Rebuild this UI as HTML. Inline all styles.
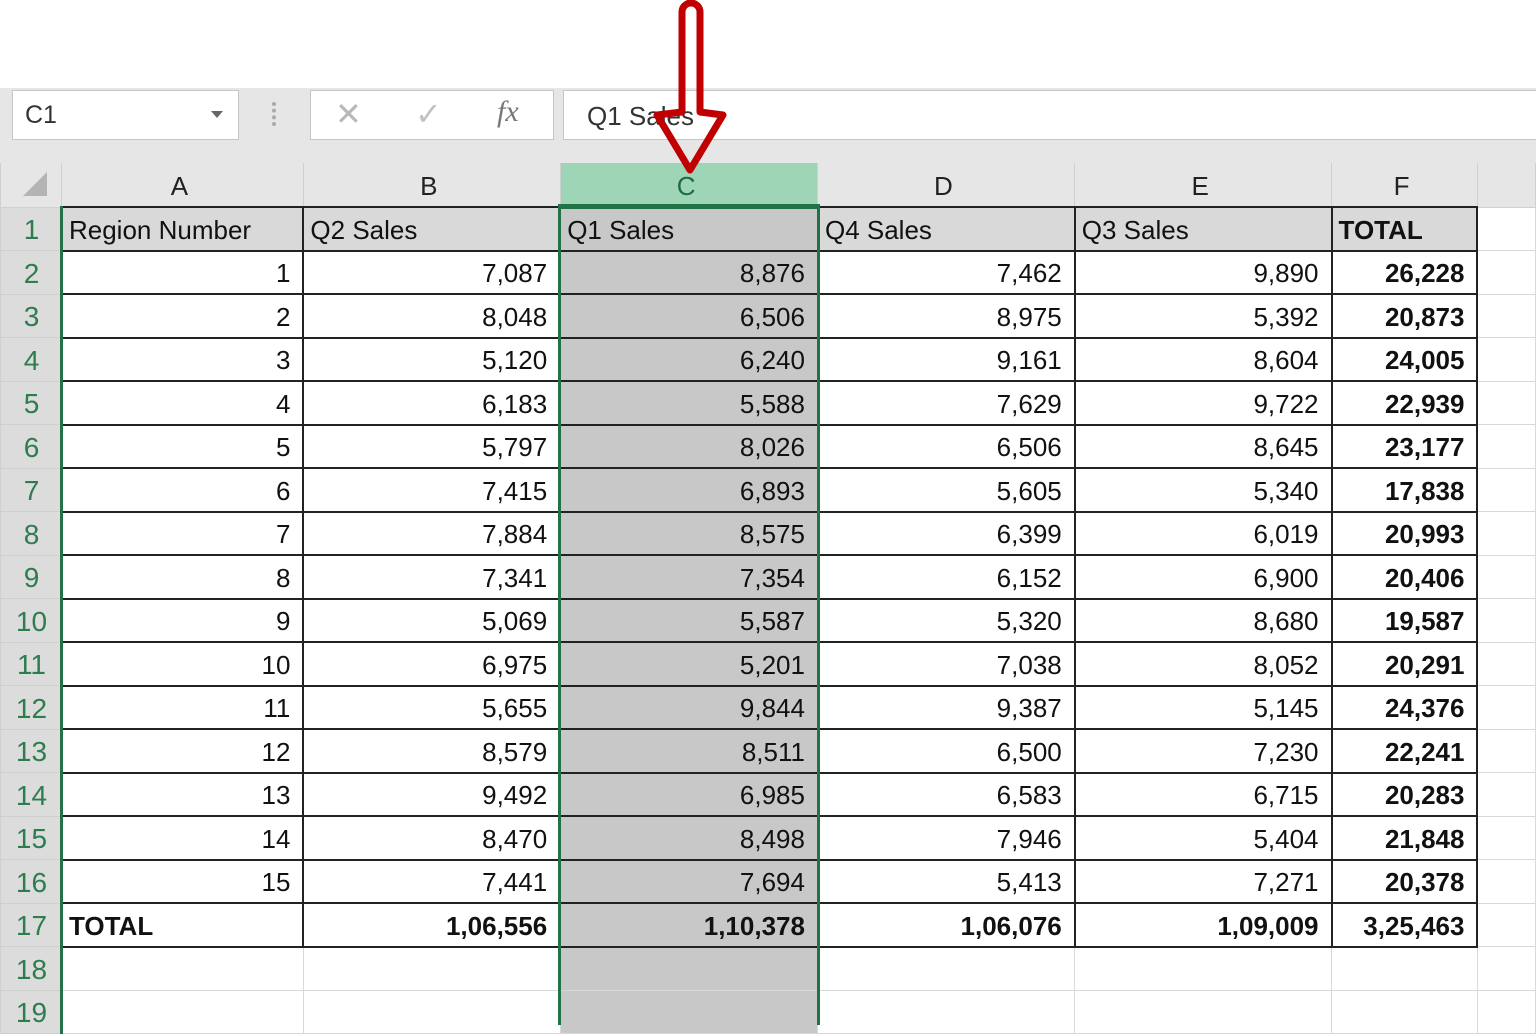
<!DOCTYPE html>
<html><head><meta charset="utf-8"><style>
*{margin:0;padding:0;box-sizing:border-box}
body{width:1536px;height:1020px;overflow:hidden;background:#fff;font-family:"Liberation Sans",Calibri,sans-serif;position:relative}
.bar{position:absolute;left:0;top:88px;width:1536px;height:75px;background:#e6e6e6}
.box{position:absolute;background:#fff;border:1px solid #c6c6c6}
table{position:absolute;left:0;top:163px;border-collapse:collapse;table-layout:fixed}
td{height:43.5px;border:1px solid #d8d8d8;font-size:26px;color:#111;padding:0 12px 0 6px;white-space:nowrap;overflow:hidden;vertical-align:bottom;padding-bottom:4px}
tr.h td{height:44px;background:#e6e6e6;text-align:center;color:#222;border-color:#d0d0d0;border-top:none}
td.rh{background:#dcdcdc;color:#2e7d4f;text-align:center;padding:0 0 4px 2px;font-size:28px;border-color:#cfcfcf;border-right:3px solid #217346}
td.d{border:2px solid #222;text-align:right}
td.l{text-align:left}
tr.r1 td.d{background:#d9d9d9;text-align:left}
td.c{background:#c8c8c8!important}
td.b{font-weight:bold}
</style></head><body>
<div class="bar"></div>
<div class="box" style="left:12px;top:90px;width:227px;height:50px"><span style="position:absolute;left:12px;top:10px;font-size:25px;color:#333">C1</span><span style="position:absolute;left:198px;top:20px;border:6px solid transparent;border-top:7px solid #666"></span></div>
<div style="position:absolute;left:272px;top:102px;width:4px;height:24px;border-left:4px dotted #aaa"></div>
<div class="box" style="left:310px;top:90px;width:244px;height:50px"><span style="position:absolute;left:24px;top:4px;font-size:32px;color:#b8b8b8">✕</span><span style="position:absolute;left:104px;top:4px;font-size:32px;color:#c2c2c2">✓</span><span style="position:absolute;left:186px;top:4px;font-size:30px;color:#777;font-style:italic;font-family:'Liberation Serif',serif">fx</span></div>
<div class="box" style="left:563px;top:90px;width:980px;height:50px"><span style="position:absolute;left:23px;top:10px;font-size:26px;color:#333">Q1 Sales</span></div>
<table>
<colgroup><col style="width:61px"><col style="width:242px"><col style="width:257px"><col style="width:258px"><col style="width:257px"><col style="width:257px"><col style="width:146px"><col style="width:58px"></colgroup>
<tr class="h"><td style="background:#e6e6e6;border-right:1px solid #d0d0d0"><svg width="30" height="30" style="position:relative;left:6px;top:2px"><polygon points="28,4 28,28 4,28" fill="#b4b4b4"/></svg></td><td>A</td><td>B</td><td style="background:#9fd5b7;color:#1e6b41;border-bottom:3px solid #217346">C</td><td>D</td><td>E</td><td>F</td><td></td></tr>
<tr class="r1"><td class="rh">1</td><td class="d l">Region Number</td><td class="d">Q2 Sales</td><td class="d c">Q1 Sales</td><td class="d">Q4 Sales</td><td class="d">Q3 Sales</td><td class="d b">TOTAL</td><td></td></tr>
<tr><td class="rh">2</td><td class="d">1</td><td class="d">7,087</td><td class="d c">8,876</td><td class="d">7,462</td><td class="d">9,890</td><td class="d b">26,228</td><td></td></tr>
<tr><td class="rh">3</td><td class="d">2</td><td class="d">8,048</td><td class="d c">6,506</td><td class="d">8,975</td><td class="d">5,392</td><td class="d b">20,873</td><td></td></tr>
<tr><td class="rh">4</td><td class="d">3</td><td class="d">5,120</td><td class="d c">6,240</td><td class="d">9,161</td><td class="d">8,604</td><td class="d b">24,005</td><td></td></tr>
<tr><td class="rh">5</td><td class="d">4</td><td class="d">6,183</td><td class="d c">5,588</td><td class="d">7,629</td><td class="d">9,722</td><td class="d b">22,939</td><td></td></tr>
<tr><td class="rh">6</td><td class="d">5</td><td class="d">5,797</td><td class="d c">8,026</td><td class="d">6,506</td><td class="d">8,645</td><td class="d b">23,177</td><td></td></tr>
<tr><td class="rh">7</td><td class="d">6</td><td class="d">7,415</td><td class="d c">6,893</td><td class="d">5,605</td><td class="d">5,340</td><td class="d b">17,838</td><td></td></tr>
<tr><td class="rh">8</td><td class="d">7</td><td class="d">7,884</td><td class="d c">8,575</td><td class="d">6,399</td><td class="d">6,019</td><td class="d b">20,993</td><td></td></tr>
<tr><td class="rh">9</td><td class="d">8</td><td class="d">7,341</td><td class="d c">7,354</td><td class="d">6,152</td><td class="d">6,900</td><td class="d b">20,406</td><td></td></tr>
<tr><td class="rh">10</td><td class="d">9</td><td class="d">5,069</td><td class="d c">5,587</td><td class="d">5,320</td><td class="d">8,680</td><td class="d b">19,587</td><td></td></tr>
<tr><td class="rh">11</td><td class="d">10</td><td class="d">6,975</td><td class="d c">5,201</td><td class="d">7,038</td><td class="d">8,052</td><td class="d b">20,291</td><td></td></tr>
<tr><td class="rh">12</td><td class="d">11</td><td class="d">5,655</td><td class="d c">9,844</td><td class="d">9,387</td><td class="d">5,145</td><td class="d b">24,376</td><td></td></tr>
<tr><td class="rh">13</td><td class="d">12</td><td class="d">8,579</td><td class="d c">8,511</td><td class="d">6,500</td><td class="d">7,230</td><td class="d b">22,241</td><td></td></tr>
<tr><td class="rh">14</td><td class="d">13</td><td class="d">9,492</td><td class="d c">6,985</td><td class="d">6,583</td><td class="d">6,715</td><td class="d b">20,283</td><td></td></tr>
<tr><td class="rh">15</td><td class="d">14</td><td class="d">8,470</td><td class="d c">8,498</td><td class="d">7,946</td><td class="d">5,404</td><td class="d b">21,848</td><td></td></tr>
<tr><td class="rh">16</td><td class="d">15</td><td class="d">7,441</td><td class="d c">7,694</td><td class="d">5,413</td><td class="d">7,271</td><td class="d b">20,378</td><td></td></tr>
<tr><td class="rh">17</td><td class="d l b">TOTAL</td><td class="d b">1,06,556</td><td class="d c b">1,10,378</td><td class="d b">1,06,076</td><td class="d b">1,09,009</td><td class="d b">3,25,463</td><td></td></tr>
<tr><td class="rh">18</td><td></td><td></td><td class="c"></td><td></td><td></td><td></td><td></td></tr>
<tr><td class="rh">19</td><td></td><td></td><td class="c"></td><td></td><td></td><td></td><td></td></tr>
</table>
<div style="position:absolute;left:558px;top:205px;width:3px;height:820px;background:#217346"></div>
<div style="position:absolute;left:817px;top:205px;width:3px;height:820px;background:#217346"></div>
<div style="position:absolute;left:558px;top:204px;width:262px;height:3px;background:#217346"></div>
<svg style="position:absolute;left:0;top:0" width="1536" height="200"><path d="M682,112 L682,12 A9,9 0 0 1 700,12 L700,112 L723,115 L690,170 L657,115 Z" fill="none" stroke="#c00000" stroke-width="7" stroke-linejoin="round"/></svg>
</body></html>
